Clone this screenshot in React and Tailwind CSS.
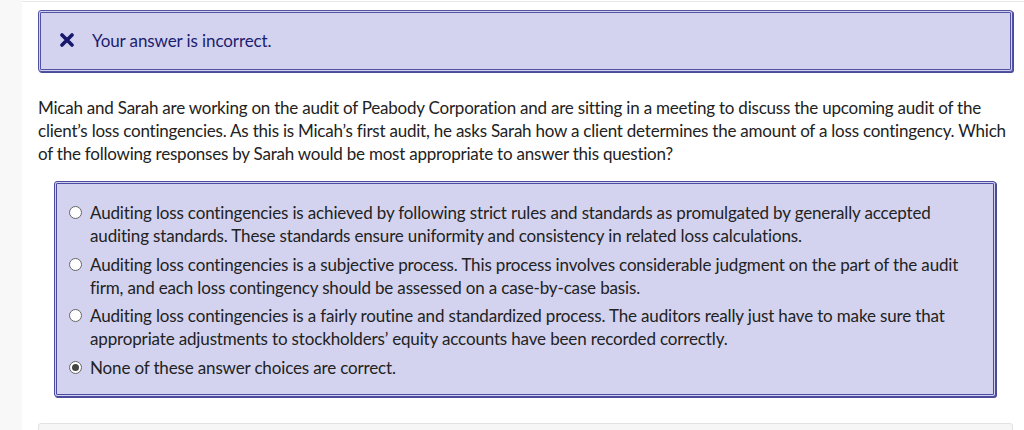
import React from 'react';

const options = [
  'Auditing loss contingencies is achieved by following strict rules and standards as promulgated by generally accepted auditing standards. These standards ensure uniformity and consistency in related loss calculations.',
  'Auditing loss contingencies is a subjective process. This process involves considerable judgment on the part of the audit firm, and each loss contingency should be assessed on a case-by-case basis.',
  'Auditing loss contingencies is a fairly routine and standardized process. The auditors really just have to make sure that appropriate adjustments to stockholders’ equity accounts have been recorded correctly.',
  'None of these answer choices are correct.',
];

function Radio({ checked }) {
  return (
    <span className="mt-[5px] flex h-[13px] w-[13px] shrink-0 items-center justify-center rounded-full border border-[#666] bg-white">
      {checked && <span className="h-[7px] w-[7px] rounded-full bg-[#444]" />}
    </span>
  );
}

export default function App() {
  return (
    <div className="flex h-[430px] w-[1024px] overflow-hidden bg-white font-['Lato','Liberation_Sans',sans-serif]">
      {/* left gutter */}
      <div className="w-[22px] shrink-0 bg-[#f8f8f8]" />

      <div className="flex min-w-0 flex-1 flex-col">
        <div className="h-[1px] shrink-0 bg-white" />
        <div className="h-[1px] shrink-0 bg-[#e8e8e8]" />

        <div className="flex flex-col pl-[16px] pr-[11px] pt-[8px]">
          {/* feedback */}
          <div className="flex h-[62px] items-center rounded-[3px] border-[3px] border-double border-[#5252a3] bg-[#d3d3ef] pl-[19px] shadow-[1px_1px_0_#4a4a9a]">
            <svg width="14" height="14" viewBox="0 0 14 14" className="mt-[-2px]">
              <path d="M2 2 L12 12 M12 2 L2 12" stroke="#17176b" strokeWidth="3.6" strokeLinecap="round" />
            </svg>
            <span className="ml-[18px] text-[17px] tracking-[-0.1px] text-[#1c1c6e]">Your answer is incorrect.</span>
          </div>

          {/* question */}
          <p className="mt-[24px] text-[17px] leading-[23px] tracking-[-0.22px] text-[#222]">
            Micah and Sarah are working on the audit of Peabody Corporation and are sitting in a meeting to discuss the upcoming audit of the client’s loss contingencies. As this is Micah’s first audit, he asks Sarah how a client determines the amount of a loss contingency. Which of the following responses by Sarah would be most appropriate to answer this question?
          </p>

          {/* answers */}
          <div className="ml-[16px] mr-[17px] mt-[16px] flex h-[216px] flex-col gap-[5.5px] rounded-[3px] border-[3px] border-double border-[#4a4aa0] bg-[#d3d3ef] pb-[16px] pl-[12px] pr-[20px] pt-[17px] shadow-[1px_1px_0_#4a4a9a]">
            {options.map((o, i) => (
              <div key={i} className="flex gap-[8px]">
                <Radio checked={i === 3} />
                <span className="text-[17px] leading-[23px] tracking-[-0.15px] text-[#222]">{o}</span>
              </div>
            ))}
          </div>

          {/* next panel */}
          <div className="mt-[26px] h-[20px] rounded-t-[3px] border border-[#e2e2e2] bg-[#f6f6f6]" />
        </div>
      </div>
    </div>
  );
}
